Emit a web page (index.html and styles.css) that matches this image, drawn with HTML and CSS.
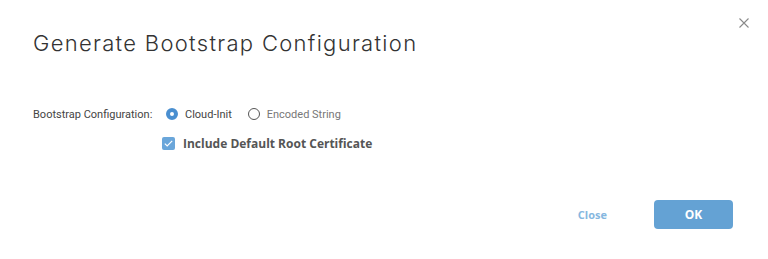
FILE: index.html
```html
<!DOCTYPE html>
<html>
<head>
<meta charset="utf-8">
<link rel="stylesheet" href="styles.css">
</head>
<body>
<div class="dialog">
  <button class="close-x" aria-label="Close">
    <svg width="10" height="10" viewBox="0 0 10 10"><path d="M0.5 0.5L9.5 9.5M9.5 0.5L0.5 9.5" stroke="#8a8a8a" stroke-width="1.1" fill="none"/></svg>
  </button>
  <h1 class="title">Generate Bootstrap Configuration</h1>
  <div class="form">
    <div class="row">
      <span class="label">Bootstrap Configuration:</span>
      <label class="radio checked"><span class="dot"></span><span class="rtext">Cloud-Init</span></label>
      <label class="radio"><span class="dot"></span><span class="rtext muted">Encoded String</span></label>
    </div>
    <div class="row row2">
      <label class="check"><span class="box"><svg width="9" height="7" viewBox="0 0 9 7"><path d="M0.8 3.6L3.2 5.9L8.2 0.9" stroke="#fff" stroke-width="1.2" fill="none"/></svg></span><span class="ctext">Include Default Root Certificate</span></label>
    </div>
  </div>
  <div class="footer">
    <button class="btn-link">Close</button>
    <button class="btn-primary">OK</button>
  </div>
</div>
</body>
</html>
```
FILE: styles.css
```css
html, body {
  margin: 0;
  padding: 0;
  background: #fff;
}
body {
  font-family: Roboto, "Liberation Sans", sans-serif;
  color: #3a3a3a;
}
.dialog {
  position: relative;
  width: 768px;
  height: 259px;
  box-sizing: border-box;
  padding: 26px 35px 0 33px;
}
.close-x {
  position: absolute;
  top: 18px;
  right: 19px;
  border: 0;
  background: none;
  padding: 0;
  width: 10px;
  height: 10px;
  display: flex;
}
.title {
  margin: 0;
  font-family: Inter, Roboto, sans-serif;
  font-size: 22px;
  font-weight: 300;
  line-height: 34px;
  letter-spacing: 1.3px;
  color: #333;
}
.form {
  margin-top: 44px;
  font-size: 11px;
}
.row {
  display: flex;
  align-items: center;
  height: 20px;
}
.label {
  width: 133px;
  color: #444;
}
.radio {
  display: flex;
  align-items: center;
  margin-right: 16px;
}
.dot {
  width: 12px;
  height: 12px;
  box-sizing: border-box;
  border-radius: 50%;
  border: 1px solid #555;
  background: #fff;
  margin-right: 7px;
}
.radio.checked .dot {
  border: 4px solid #4a8fd0;
  background: #fff;
}
.rtext { color: #444; }
.muted { color: #777; }
.row2 {
  margin-top: 9px;
  padding-left: 129px;
}
.check {
  display: flex;
  align-items: center;
}
.box {
  width: 13px;
  height: 13px;
  border-radius: 2px;
  background: #6aa6da;
  display: flex;
  align-items: center;
  justify-content: center;
  margin-right: 8px;
}
.ctext {
  font-family: "Open Sans", Roboto, sans-serif;
  font-weight: 700;
  font-size: 12px;
  color: #555;
}
.footer {
  display: flex;
  justify-content: flex-end;
  align-items: center;
  margin-top: 47px;
}
.btn-link {
  border: 0;
  background: none;
  font-family: "Open Sans", Roboto, sans-serif;
  font-size: 11px;
  font-weight: 700;
  color: #86b7e0;
  padding: 0;
  margin-right: 47px;
}
.btn-primary {
  width: 79px;
  height: 29px;
  border: 0;
  border-radius: 4px;
  background: #64a2d4;
  color: #fff;
  font-family: "Open Sans", Roboto, sans-serif;
  font-size: 12px;
  font-weight: 700;
}
```
